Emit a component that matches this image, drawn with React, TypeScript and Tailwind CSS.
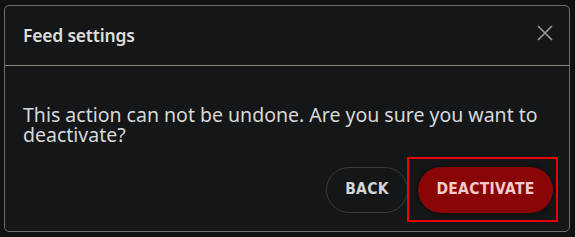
export default function App() {
  return (
    <main className="w-[575px] h-[237px] bg-[#101111] pt-[5px] pl-[4px] font-['Noto_Sans',sans-serif]">
      {/* Modal */}
      <div className="w-[566px] h-[227px] bg-[#151617] border border-[#6e6e6e] rounded-[5px] flex flex-col">
        <div className="h-[60px] flex items-center justify-between pl-[18px] pr-[16px] border-b border-[#8a8878]">
          <h2 className="text-[17.5px] font-semibold text-[#dedede] tracking-[-0.2px]">Feed settings</h2>
          <svg viewBox="0 0 16 16" className="w-[16px] h-[16px] -mt-[6px] text-[#9a9a9a]" fill="none" stroke="currentColor" strokeWidth={1.6}>
            <path d="M1 1 L15 15 M15 1 L1 15" />
          </svg>
        </div>

        <div className="flex-1 flex flex-col pt-[39px]">
          <p className="px-[18px] text-[19.5px] leading-[20px] text-[#d8d8d8]">
            This action can not be undone. Are you sure you want to deactivate?
          </p>

          <div className="mt-auto mb-[9px] flex justify-end items-center pr-[11px]">
            <button className="h-[46px] w-[82px] -mr-[1px] rounded-full border border-[#3b3b3b] text-[15.5px] font-bold text-[#d4d4d4] tracking-[0.3px] font-['DejaVu_Sans_Condensed','Noto_Sans',sans-serif]">
              BACK
            </button>
            <div className="border-[2px] border-[#ee0000] pt-[8px] pb-[7px] pl-[9px] pr-[3px]">
              <button className="h-[46px] w-[135px] rounded-full bg-[#8a0606] text-[15.5px] font-bold text-[#f2cccc] tracking-[0.3px] font-['DejaVu_Sans_Condensed','Noto_Sans',sans-serif] shadow-[0_0_4px_rgba(0,0,0,0.6)]">
                DEACTIVATE
              </button>
            </div>
          </div>
        </div>
      </div>
    </main>
  );
}
